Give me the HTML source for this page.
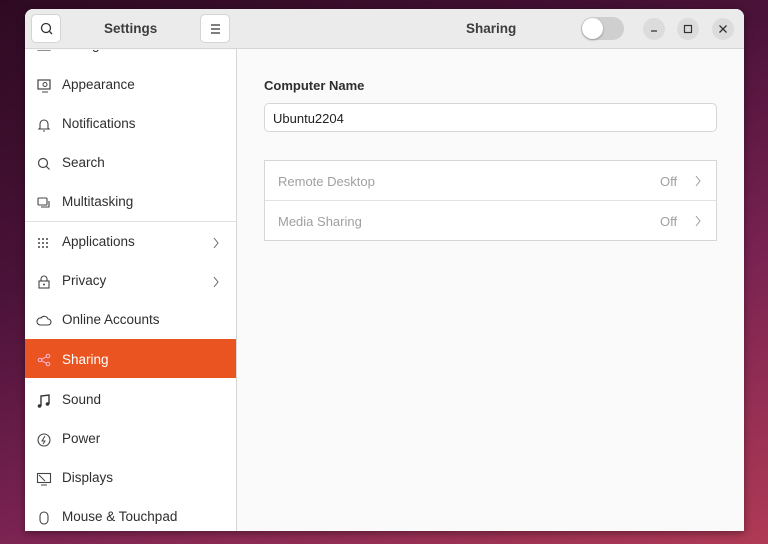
<!DOCTYPE html>
<html><head><meta charset="utf-8"><style>
*{margin:0;padding:0;box-sizing:border-box}
body{width:768px;height:544px;overflow:hidden;font-family:"Liberation Sans",sans-serif;
background:linear-gradient(160deg,#2e0a22 0%,#4a1238 35%,#7a2352 65%,#b03a55 100%);position:relative}
.win{position:absolute;left:25px;top:9px;width:719px;height:522px;background:#fafafa;border-radius:8px 8px 0 0;overflow:hidden;box-shadow:0 2px 8px rgba(0,0,0,.4)}
.hdr{position:absolute;left:0;top:0;width:719px;height:40px;background:#ebebeb;border-bottom:1px solid #d6d6d6;z-index:2}
.sep{position:absolute;left:211px;top:0;width:1px;height:522px;background:#d6d6d6}
.side{position:absolute;left:0;top:41px;width:211px;height:481px;background:#fff;overflow:hidden}
.btn{position:absolute;top:5px;width:30px;height:29px;background:#fff;border:1px solid #d4d4d4;border-radius:5px}
.t{position:absolute;font-weight:bold;font-size:13.5px;color:#3d3d3d}
.row{position:absolute;left:0;width:211px;height:39px;font-size:13.5px;color:#2e2e2e}
.row span{position:absolute;left:37px;top:12px}
.row svg{position:absolute;left:11px;top:13px}
.chev{position:absolute;left:186px;top:12px}
.wc{position:absolute;top:9px;width:22px;height:22px;border-radius:50%;background:#dcdcdc}
</style></head><body>
<div class="win">
<div class="hdr">
<div class="btn" style="left:6px"><svg width="30" height="29"><circle cx="14" cy="13" r="4.5" fill="none" stroke="#333" stroke-width="1.3"/><line x1="17.5" y1="16.5" x2="20" y2="19" stroke="#333" stroke-width="1.3"/></svg></div>
<div class="t" style="left:79px;top:12px">Settings</div>
<div class="btn" style="left:175px"><svg width="30" height="29"><path d="M10 10h9M10 14h9M10 18h9" stroke="#333" stroke-width="1.2"/></svg></div>
<div class="t" style="left:441px;top:12px">Sharing</div>
<div style="position:absolute;left:556px;top:8px;width:43px;height:23px;border-radius:12px;background:#cfcfcf"><div style="position:absolute;left:1px;top:1px;width:21px;height:21px;border-radius:50%;background:#fff;box-shadow:0 1px 2px rgba(0,0,0,.3)"></div></div>
<div class="wc" style="left:618px"><svg width="22" height="22"><path d="M8 13h6" stroke="#333" stroke-width="1.3"/></svg></div>
<div class="wc" style="left:652px"><svg width="22" height="22"><rect x="7.5" y="7.5" width="7" height="7" fill="none" stroke="#333" stroke-width="1.2"/></svg></div>
<div class="wc" style="left:687px"><svg width="22" height="22"><path d="M7.5 7.5l7 7M14.5 7.5l-7 7" stroke="#333" stroke-width="1.3"/></svg></div>
</div>
<div class="sep"></div>
<div class="side">
<div class="row" style="top:-25px"><svg width="16" height="16"><rect x="2" y="2" width="12" height="10" fill="none" stroke="#444" stroke-width="1.2"/></svg><span>Background</span></div>
<div class="row" style="top:15px"><svg width="16" height="16"><rect x="2" y="2" width="12" height="9" fill="none" stroke="#444" stroke-width="1.2"/><circle cx="9" cy="6.5" r="2" fill="none" stroke="#444"/><path d="M6 14h6" stroke="#444"/></svg><span>Appearance</span></div>
<div class="row" style="top:54px"><svg width="16" height="16"><path d="M4 11V7a4 4 0 0 1 8 0v4l1 1H3z M7 14h2" fill="none" stroke="#444" stroke-width="1.1"/></svg><span>Notifications</span></div>
<div class="row" style="top:93px"><svg width="16" height="16"><circle cx="7" cy="7" r="4.5" fill="none" stroke="#444" stroke-width="1.2"/><path d="M10.5 10.5l3 3" stroke="#444" stroke-width="1.2"/></svg><span>Search</span></div>
<div class="row" style="top:132px"><svg width="16" height="16"><rect x="2" y="3" width="9" height="7" rx="1" fill="none" stroke="#444" stroke-width="1.1"/><path d="M5 12h8V6" fill="none" stroke="#444" stroke-width="1.1"/></svg><span>Multitasking</span></div>
<div style="position:absolute;left:0;top:171px;width:211px;height:1px;background:#e0e0e0"></div>
<div class="row" style="top:172px"><svg width="16" height="16" fill="#444"><circle cx="3" cy="4" r="1"/><circle cx="7" cy="4" r="1"/><circle cx="11" cy="4" r="1"/><circle cx="3" cy="8" r="1"/><circle cx="7" cy="8" r="1"/><circle cx="11" cy="8" r="1"/><circle cx="3" cy="12" r="1"/><circle cx="7" cy="12" r="1"/><circle cx="11" cy="12" r="1"/></svg><span>Applications</span><svg class="chev" width="10" height="16" style="left:186px"><path d="M3 3l4 5-4 5" fill="none" stroke="#666"/></svg></div>
<div class="row" style="top:211px"><svg width="16" height="16"><rect x="3" y="7" width="10" height="7" fill="none" stroke="#444" stroke-width="1.1"/><path d="M5 7V5a3 3 0 0 1 6 0v2" fill="none" stroke="#444" stroke-width="1.1"/><circle cx="8" cy="10.5" r="1" fill="#444"/></svg><span>Privacy</span><svg class="chev" width="10" height="16" style="left:186px"><path d="M3 3l4 5-4 5" fill="none" stroke="#666"/></svg></div>
<div class="row" style="top:250px"><svg width="16" height="16"><path d="M4 12h8a3 3 0 0 0 0-6 4 4 0 0 0-7-1 3.5 3.5 0 0 0-1 7z" fill="none" stroke="#444" stroke-width="1.1"/></svg><span>Online Accounts</span></div>
<div class="row" style="top:289px;background:#e95420;color:#fff"><svg width="16" height="16"><circle cx="4" cy="8" r="1.8" fill="none" stroke="#fbd" /><circle cx="12" cy="4" r="1.8" fill="none" stroke="#fbd"/><circle cx="12" cy="12" r="1.8" fill="none" stroke="#fbd"/><path d="M5.6 7.2l4.8-2.4M5.6 8.8l4.8 2.4" stroke="#fbd"/></svg><span style="top:13px">Sharing</span></div>
<div class="row" style="top:330px"><svg width="16" height="16"><path d="M5 13V3l8-1v9" fill="none" stroke="#333" stroke-width="1.4"/><circle cx="3.5" cy="13" r="1.8" fill="#333"/><circle cx="11.5" cy="11" r="1.8" fill="#333"/></svg><span>Sound</span></div>
<div class="row" style="top:369px"><svg width="16" height="16"><circle cx="8" cy="8" r="6" fill="none" stroke="#444" stroke-width="1.1"/><path d="M9 4L6 9h3l-2 3" fill="none" stroke="#444"/></svg><span>Power</span></div>
<div class="row" style="top:408px"><svg width="16" height="16"><rect x="1.5" y="2.5" width="13" height="9" fill="none" stroke="#444" stroke-width="1.1"/><path d="M3 4l6 6M5 14h6" stroke="#444"/></svg><span>Displays</span></div>
<div class="row" style="top:447px"><svg width="16" height="16"><rect x="4" y="2" width="8" height="12" rx="4" fill="none" stroke="#444" stroke-width="1.1"/></svg><span>Mouse &amp; Touchpad</span></div>
</div>
<div style="position:absolute;left:239px;top:69px;font-weight:bold;font-size:13px;color:#2e2e2e">Computer Name</div>
<div style="position:absolute;left:239px;top:94px;width:453px;height:29px;background:#fff;border:1px solid #d6d6d6;border-radius:5px;font-size:13px;color:#222;padding:7px 0 0 8px">Ubuntu2204</div>
<div style="position:absolute;left:239px;top:151px;width:453px;height:81px;background:#fff;border:1px solid #d6d6d6;font-size:13px;color:#a0a0a0">
<div style="position:absolute;left:13px;top:13px">Remote Desktop</div>
<div style="position:absolute;left:395px;top:13px">Off</div>
<svg style="position:absolute;left:428px;top:12px" width="10" height="16"><path d="M3 3l4 5-4 5" fill="none" stroke="#999"/></svg>
<div style="position:absolute;left:0;top:39px;width:451px;height:1px;background:#e2e2e2"></div>
<div style="position:absolute;left:13px;top:53px">Media Sharing</div>
<div style="position:absolute;left:395px;top:53px">Off</div>
<svg style="position:absolute;left:428px;top:52px" width="10" height="16"><path d="M3 3l4 5-4 5" fill="none" stroke="#999"/></svg>
</div>
</div>
</body></html>
